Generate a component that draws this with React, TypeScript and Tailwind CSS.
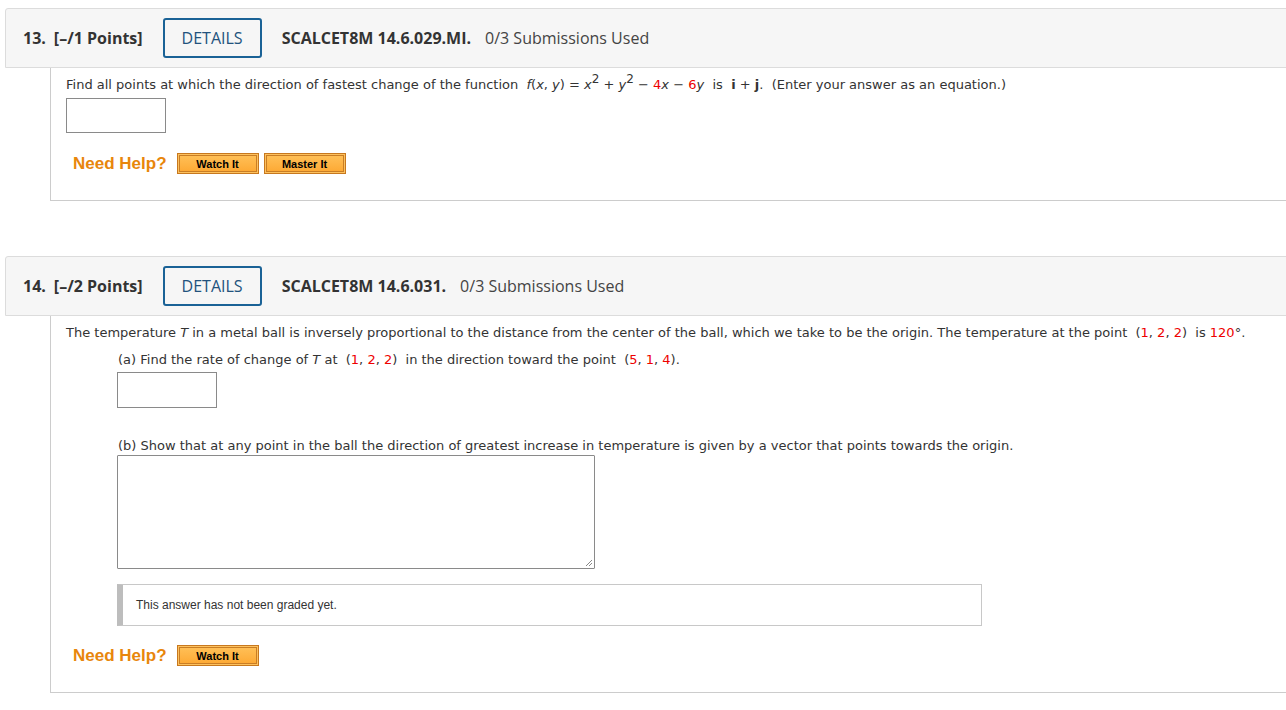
import React from "react";

const verdana = { fontFamily: "Verdana, 'DejaVu Sans', sans-serif" };

function Header({ num, pts, code }: { num: string; pts: string; code: string }) {
  return (
    <div
      className="ml-[5px] -mr-3 h-[60px] border border-[#dcdcdc] rounded-tl-[3px] bg-[#f6f6f6] flex items-center text-[16px] text-[#333]"
      style={{ fontFamily: "'Open Sans', sans-serif" }}
    >
      <span className="ml-[17px] font-bold">{num}</span>
      <span className="ml-[8px] font-bold">{pts}</span>
      <span className="ml-[20px] h-[40px] w-[99px] border-2 border-[#1a6296] rounded-[3px] flex items-center justify-center text-[#22527d] font-normal">
        DETAILS
      </span>
      <span className="ml-[20px] font-bold">{code}</span>
      <span className="ml-[14px] text-[#444]">0/3 Submissions Used</span>
    </div>
  );
}

function HelpButton({ label }: { label: string }) {
  return (
    <span className="inline-flex h-[21px] w-[82px] border border-[#c8781e] bg-[#fcc15e] p-[1px]">
      <span
        className="flex-1 border border-[#c97d25] bg-gradient-to-b from-[#ffbf55] to-[#fdaa35] flex items-center justify-center text-[11px] font-bold text-black"
        style={{ fontFamily: "'Liberation Sans', Arial, sans-serif" }}
      >
        {label}
      </span>
    </span>
  );
}

function NeedHelp({ buttons }: { buttons: string[] }) {
  return (
    <div className="flex items-center ml-[7px]">
      <span
        className="text-[17px] font-bold text-[#e8860c] mr-[10px]"
        style={{ fontFamily: "'Liberation Sans', Arial, sans-serif" }}
      >
        Need Help?
      </span>
      <div className="flex gap-[5px]">
        {buttons.map((b) => (
          <HelpButton key={b} label={b} />
        ))}
      </div>
    </div>
  );
}

const R = ({ children }: { children: React.ReactNode }) => <span className="text-[#ee0000]">{children}</span>;

export default function App() {
  return (
    <div className="w-full overflow-hidden bg-white text-[#333] pt-[8px] pb-[20px]">
      {/* Question 13 */}
      <Header num="13." pts="[–/1 Points]" code="SCALCET8M 14.6.029.MI." />
      <div className="ml-[50px] -mr-3 border-l border-b border-[#cccccc] h-[133px] pl-[15px] pt-[8px]">
        <p className="text-[13px] leading-[18px] text-[#333]" style={verdana}>
          Find all points at which the direction of fastest change of the function&nbsp;{" "}
          <i>f</i>(<i>x</i>, <i>y</i>) = <i>x</i>
          <sup className="text-[12px] relative top-[-6px]">2</sup> + <i>y</i>
          <sup className="text-[12px] relative top-[-6px]">2</sup> − <R>4</R>
          <i>x</i> − <R>6</R>
          <i>y</i>&nbsp; is&nbsp; <b>i</b> + <b>j</b>.&nbsp; (Enter your answer as an equation.)
        </p>
        <div className="mt-[4px] w-[100px] h-[35px] border border-[#8a8a8a]" />
        <div className="mt-[18px]">
          <NeedHelp buttons={["Watch It", "Master It"]} />
        </div>
      </div>

      <div className="h-[55px]" />

      {/* Question 14 */}
      <Header num="14." pts="[–/2 Points]" code="SCALCET8M 14.6.031." />
      <div className="ml-[50px] -mr-3 border-l border-b border-[#cccccc] h-[377px] pl-[15px] pt-[8px]" style={verdana}>
        <p className="text-[13px] leading-[18px] whitespace-nowrap">
          The temperature <i>T</i> in a metal ball is inversely proportional to the distance from the center of the ball, which we take to be the origin. The temperature at the point&nbsp; (<R>1</R>, <R>2</R>, <R>2</R>)&nbsp; is <R>120</R>°.
        </p>
        <div className="ml-[52px]">
          <p className="mt-[9px] text-[13px] leading-[18px]">
            (a) Find the rate of change of <i>T</i> at&nbsp; (<R>1</R>, <R>2</R>, <R>2</R>)&nbsp; in the direction toward the point&nbsp; (<R>5</R>, <R>1</R>, <R>4</R>).
          </p>
          <div className="mt-[3px] -ml-[1px] w-[100px] h-[36px] border border-[#8a8a8a]" />
          <p className="mt-[29px] text-[13px] leading-[18px]">
            (b) Show that at any point in the ball the direction of greatest increase in temperature is given by a vector that points towards the origin.
          </p>
          <div className="relative -ml-[1px] w-[478px] h-[114px] border border-[#8a8a8a] rounded-[1px]">
            <svg className="absolute right-[1px] bottom-[1px]" width="8" height="8" viewBox="0 0 8 8">
              <line x1="7" y1="1" x2="1" y2="7" stroke="#888" strokeWidth="1" />
              <line x1="7" y1="4" x2="4" y2="7" stroke="#888" strokeWidth="1" />
            </svg>
          </div>
          <div className="mt-[15px] -ml-[1px] w-[865px] h-[42px] border border-[#c8c8c8] border-l-[6px] border-l-[#bdbdbd] flex items-center pl-[13px]">
            <span className="text-[12px] text-[#333]" style={{ fontFamily: "'Liberation Sans', Arial, sans-serif" }}>
              This answer has not been graded yet.
            </span>
          </div>
        </div>
        <div className="mt-[17px]">
          <NeedHelp buttons={["Watch It"]} />
        </div>
      </div>
    </div>
  );
}
